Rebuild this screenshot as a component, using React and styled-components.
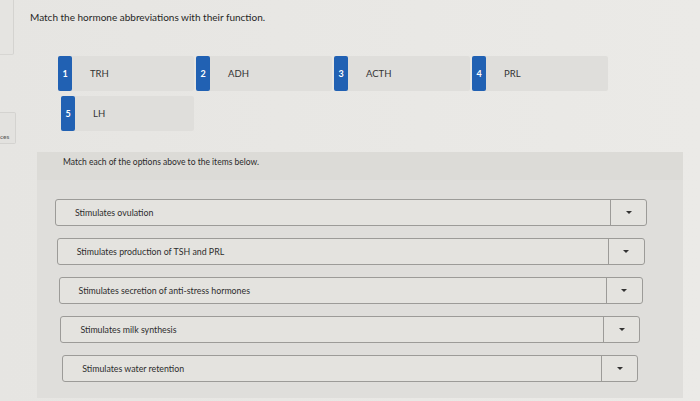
import React from "react";
import styled, { createGlobalStyle } from "styled-components";

const Global = createGlobalStyle`
  html, body { margin: 0; padding: 0; }
  body {
    background: #e7e6e3;
    font-family: Lato, "Open Sans", "Liberation Sans", sans-serif;
    color: #2a2a2a;
    width: 700px;
    height: 401px;
    overflow: hidden;
  }
`;

const Page = styled.div`
  display: flex;
  width: 700px;
  height: 401px;
  background: linear-gradient(90deg, #e6e5e2 0%, #e9e8e5 60%, #ebeae7 100%);
`;

const Sidebar = styled.div`
  width: 16px;
  display: flex;
  flex-direction: column;
  flex-shrink: 0;
`;

const SideTop = styled.div`
  width: 13px;
  height: 54px;
  border-right: 1px solid #d4d3d0;
  border-bottom: 1px solid #d7d6d3;
  border-bottom-right-radius: 2px;
  background: #e5e4e1;
`;

const SideTab = styled.div`
  margin-top: 57px;
  height: 32px;
  display: flex;
  align-items: flex-end;
  background: #e3e2df;
  border: 1px solid #d4d3d0;
  border-left: none;
  border-radius: 0 2px 2px 0;
  font-size: 6.5px;
  color: #555;
  padding-bottom: 3px;
  box-sizing: border-box;
`;

const Main = styled.div`
  flex: 1;
  display: flex;
  flex-direction: column;
`;

const Title = styled.div`
  margin: 10px 0 0 14px;
  font-size: 10px;
  line-height: 14px;
  color: #262626;
`;

const Options = styled.div`
  margin: 32px 0 0 42px;
  display: grid;
  grid-template-columns: repeat(4, 136px);
  column-gap: 2px;
  row-gap: 5px;
`;

const Tile = styled.div`
  display: flex;
  height: 35px;
  background: #dfdedb;
  border-radius: 2px;
  margin-left: ${(p) => p.$shift || 0}px;
`;

const Badge = styled.div`
  width: 14px;
  flex-shrink: 0;
  background: #2161b3;
  border-radius: 2px;
  color: #fff;
  font-weight: 700;
  font-size: 9px;
  display: flex;
  align-items: center;
  justify-content: center;
`;

const TileLabel = styled.div`
  display: flex;
  align-items: center;
  padding-left: 18px;
  font-size: 9.5px;
  color: #333;
`;

const Panel = styled.div`
  margin: 21px 17px 3px 21px;
  flex: 1;
  background: #dfdedb;
  display: flex;
  flex-direction: column;
`;

const PanelHead = styled.div`
  height: 28px;
  background: #dcdbd7;
  padding: 5px 0 0 26px;
  box-sizing: border-box;
  font-size: 8.5px;
  color: #2a2a2a;
`;

const Rows = styled.div`
  margin-top: 19px;
  display: flex;
  flex-direction: column;
  gap: 12px;
`;

const Select = styled.div`
  display: flex;
  height: 27px;
  box-sizing: border-box;
  border: 1px solid #9c9b98;
  border-radius: 3px;
  background: #e4e3df;
  margin-left: ${(p) => 18 + p.$i * 1.8}px;
  margin-right: ${(p) => 36 + p.$i * 2.2}px;
`;

const SelectText = styled.div`
  flex: 1;
  display: flex;
  align-items: center;
  padding-left: 19px;
  font-size: 8.8px;
  color: #2d2d2d;
`;

const Caret = styled.div`
  width: 35px;
  border-left: 1px solid #9c9b98;
  display: flex;
  align-items: center;
  justify-content: center;
  &::after {
    content: "";
    border-left: 3px solid transparent;
    border-right: 3px solid transparent;
    border-top: 3.5px solid #333;
  }
`;

const options = [
  { n: 1, label: "TRH" },
  { n: 2, label: "ADH" },
  { n: 3, label: "ACTH" },
  { n: 4, label: "PRL" },
  { n: 5, label: "LH", shift: 3 },
];

const items = [
  "Stimulates ovulation",
  "Stimulates production of TSH and PRL",
  "Stimulates secretion of anti-stress hormones",
  "Stimulates milk synthesis",
  "Stimulates water retention",
];

export default function App() {
  return (
    <>
      <Global />
      <Page>
        <Sidebar>
          <SideTop />
          <SideTab>ces</SideTab>
        </Sidebar>
        <Main>
          <Title>Match the hormone abbreviations with their function.</Title>
          <Options>
            {options.map((o) => (
              <Tile key={o.n} $shift={o.shift}>
                <Badge>{o.n}</Badge>
                <TileLabel>{o.label}</TileLabel>
              </Tile>
            ))}
          </Options>
          <Panel>
            <PanelHead>Match each of the options above to the items below.</PanelHead>
            <Rows>
              {items.map((t, i) => (
                <Select key={t} $i={i}>
                  <SelectText>{t}</SelectText>
                  <Caret />
                </Select>
              ))}
            </Rows>
          </Panel>
        </Main>
      </Page>
    </>
  );
}
